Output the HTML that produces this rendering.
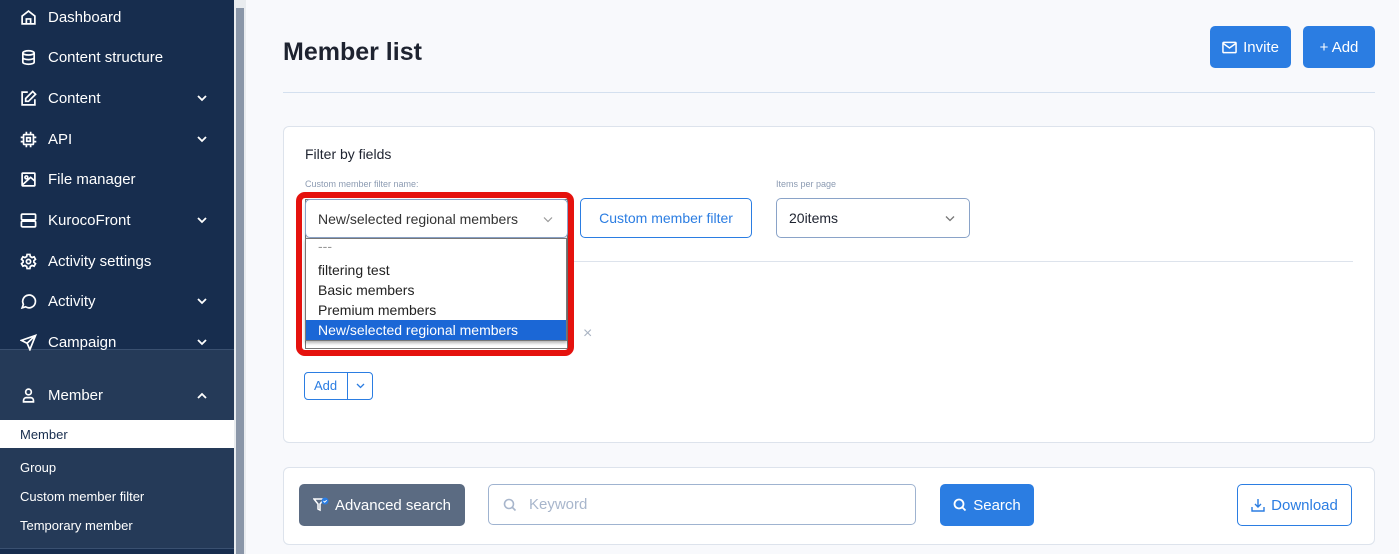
<!DOCTYPE html>
<html><head><style>
*{box-sizing:border-box;margin:0;padding:0}
body{width:1399px;height:554px;overflow:hidden;background:#f8f9fc;font-family:"Liberation Sans",sans-serif;position:relative}
.sb{position:absolute;left:0;top:0;width:234px;height:554px;background:#172d4e}
.scr{position:absolute;left:234px;top:0;width:12px;height:554px;background:#e9ecef}
.scr i{position:absolute;left:2px;top:8px;width:8px;height:546px;background:#8a96a8}
.it{position:absolute;left:20px;color:#fff;font-size:15px;display:flex;align-items:center;gap:11px;height:20px}
.it svg{flex:none}
.chev{position:absolute;left:196px}
.sub{position:absolute;left:20px;color:#fff;font-size:13px}
.abs{position:absolute}
.btn{position:absolute;background:#2b7de2;color:#fff;border-radius:5px;font-size:15px;display:flex;align-items:center;justify-content:center;gap:6px}
</style></head><body>
<div class="sb"></div>
<div class="abs" style="left:0;top:349px;width:234px;height:200px;background:#253a58;border-top:1px solid #3a5070;border-bottom:1px solid #3a5070"></div>
<div class="scr"><i></i></div>
<div class="it" style="top:7px"><svg width="17" height="17" viewBox="0 0 24 24" fill="none" stroke="#fff" stroke-width="2.4"><path d="M3 10l9-7 9 7v11H3z M9 21v-7h6v7"/></svg>Dashboard</div>
<div class="it" style="top:47px"><svg width="17" height="17" viewBox="0 0 24 24" fill="none" stroke="#fff" stroke-width="2.4"><ellipse cx="12" cy="5.5" rx="8" ry="3"/><path d="M4 5.5v13c0 1.7 3.6 3 8 3s8-1.3 8-3v-13M4 12c0 1.7 3.6 3 8 3s8-1.3 8-3"/></svg>Content structure</div>
<div class="it" style="top:88px"><svg width="17" height="17" viewBox="0 0 24 24" fill="none" stroke="#fff" stroke-width="2.4"><path d="M11 3H3v18h18v-8M18 2l4 4-10 10H8v-4z"/></svg>Content</div>
<div class="it" style="top:129px"><svg width="17" height="17" viewBox="0 0 24 24" fill="none" stroke="#fff" stroke-width="2.4"><rect x="5" y="5" width="14" height="14" rx="1"/><rect x="9.5" y="9.5" width="5" height="5"/><path d="M9 1v4M15 1v4M9 19v4M15 19v4M1 9h4M1 15h4M19 9h4M19 15h4"/></svg>API</div>
<div class="it" style="top:169px"><svg width="17" height="17" viewBox="0 0 24 24" fill="none" stroke="#fff" stroke-width="2.4"><rect x="3" y="3" width="18" height="18" rx="1"/><circle cx="9" cy="9" r="2"/><path d="M21 14l-6-5-12 11"/></svg>File manager</div>
<div class="it" style="top:210px"><svg width="17" height="17" viewBox="0 0 24 24" fill="none" stroke="#fff" stroke-width="2.4"><rect x="2" y="3" width="20" height="8" rx="1.5"/><rect x="2" y="13" width="20" height="8" rx="1.5"/><path d="M6 7h.01M6 17h.01"/></svg>KurocoFront</div>
<div class="it" style="top:251px"><svg width="17" height="17" viewBox="0 0 24 24" fill="none" stroke="#fff" stroke-width="2.4"><circle cx="12" cy="12" r="3"/><path d="M10 2h4l.6 3 2.4 1.4 2.9-1 2 3.5-2.3 2v2.2l2.3 2-2 3.5-2.9-1L14.6 19l-.6 3h-4l-.6-3L7 17.6l-2.9 1-2-3.5 2.3-2v-2.2l-2.3-2 2-3.5 2.9 1L9.4 5z"/></svg>Activity settings</div>
<div class="it" style="top:291px"><svg width="17" height="17" viewBox="0 0 24 24" fill="none" stroke="#fff" stroke-width="2.4"><path d="M3 21l1.8-5A9 9 0 1 1 8 19.5z"/></svg>Activity</div>
<div class="it" style="top:332px"><svg width="17" height="17" viewBox="0 0 24 24" fill="none" stroke="#fff" stroke-width="2.4"><path d="M22 2L2 9l8 4 4 9z M10 13L22 2"/></svg>Campaign</div>
<div class="it" style="top:385px"><svg width="17" height="17" viewBox="0 0 24 24" fill="none" stroke="#fff" stroke-width="2.4"><circle cx="12" cy="7" r="4"/><path d="M5 21v-2a4 4 0 0 1 4-4h6a4 4 0 0 1 4 4v2z"/></svg>Member</div>
<svg class="chev" style="top:94px" width="12" height="8" viewBox="0 0 12 8" fill="none" stroke="#fff" stroke-width="1.8"><path d="M2 2l4 4 4-4"/></svg>
<svg class="chev" style="top:135px" width="12" height="8" viewBox="0 0 12 8" fill="none" stroke="#fff" stroke-width="1.8"><path d="M2 2l4 4 4-4"/></svg>
<svg class="chev" style="top:216px" width="12" height="8" viewBox="0 0 12 8" fill="none" stroke="#fff" stroke-width="1.8"><path d="M2 2l4 4 4-4"/></svg>
<svg class="chev" style="top:297px" width="12" height="8" viewBox="0 0 12 8" fill="none" stroke="#fff" stroke-width="1.8"><path d="M2 2l4 4 4-4"/></svg>
<svg class="chev" style="top:338px" width="12" height="8" viewBox="0 0 12 8" fill="none" stroke="#fff" stroke-width="1.8"><path d="M2 2l4 4 4-4"/></svg>
<svg class="chev" style="top:392px" width="12" height="8" viewBox="0 0 12 8" fill="none" stroke="#fff" stroke-width="1.8"><path d="M2 6l4-4 4 4"/></svg>
<div class="abs" style="left:0;top:420px;width:234px;height:28px;background:#fff"></div>
<div class="sub" style="top:427px;color:#172d4e">Member</div>
<div class="sub" style="top:460px">Group</div>
<div class="sub" style="top:489px">Custom member filter</div>
<div class="sub" style="top:518px">Temporary member</div>

<div class="abs" style="left:283px;top:38px;font-size:25px;font-weight:bold;color:#1e2330">Member list</div>
<div class="btn" style="left:1210px;top:26px;width:81px;height:42px"><svg width="15" height="13" viewBox="0 0 16 13" fill="none" stroke="#fff" stroke-width="1.6"><rect x="1" y="1" width="14" height="11" rx="1"/><path d="M1 2l7 5 7-5"/></svg>Invite</div>
<div class="btn" style="left:1303px;top:26px;width:72px;height:42px">+ Add</div>
<div class="abs" style="left:283px;top:92px;width:1092px;height:1px;background:#d4e0ef"></div>

<div class="abs" style="left:283px;top:126px;width:1092px;height:317px;background:#fff;border:1px solid #dde3ec;border-radius:6px"></div>
<div class="abs" style="left:305px;top:146px;font-size:14px;color:#1e2330">Filter by fields</div>
<div class="abs" style="left:305px;top:179px;font-size:9px;color:#8c9bb2">Custom member filter name:</div>
<div class="abs" style="left:776px;top:179px;font-size:9px;color:#8c9bb2">Items per page</div>
<div class="abs" style="left:580px;top:198px;width:172px;height:40px;border:1px solid #2b7de2;border-radius:5px;color:#2b7de2;font-size:14px;display:flex;align-items:center;justify-content:center">Custom member filter</div>
<div class="abs" style="left:776px;top:198px;width:194px;height:40px;border:1px solid #8aa3c8;border-radius:5px;color:#1e2330;font-size:14px;padding:11px 12px">20items<svg style="position:absolute;right:14px;top:16px" width="10" height="7" viewBox="0 0 10 7" fill="none" stroke="#777" stroke-width="1.3"><path d="M1 1.5l4 4 4-4"/></svg></div>
<div class="abs" style="left:305px;top:261px;width:1048px;height:1px;background:#dde3ec"></div>
<div class="abs" style="left:583px;top:325px;color:#aab4c3;font-size:16px">&#215;</div>
<div class="abs" style="left:304px;top:372px;width:69px;height:28px;border:1px solid #2b7de2;border-radius:4px;color:#2b7de2;font-size:13px"><span style="position:absolute;left:9px;top:5px">Add</span><span style="position:absolute;left:42px;top:0;width:1px;height:26px;background:#2b7de2"></span><svg style="position:absolute;left:51px;top:10px" width="9" height="6" viewBox="0 0 9 6" fill="none" stroke="#2b7de2" stroke-width="1.3"><path d="M1 1l3.5 3.5L8 1"/></svg></div>

<div class="abs" style="left:305px;top:199px;width:263px;height:150px;border:1px solid #777;background:#fff"></div>
<div class="abs" style="left:305px;top:199px;width:263px;height:39px;border:1px solid #8aa3c8;border-radius:5px;background:#fff;font-size:14px;color:#333;padding:11px 12px;box-shadow:0 2px 3px rgba(0,0,0,.15)">New/selected regional members<svg style="position:absolute;right:14px;top:16px" width="10" height="7" viewBox="0 0 10 7" fill="none" stroke="#999" stroke-width="1.2"><path d="M1 1.5l4 4 4-4"/></svg></div>
<div class="abs" style="left:305px;top:238px;width:262px;height:103px;background:#fff;border:1px solid #777;font-size:14px;color:#222;line-height:20px;box-shadow:0 2px 3px rgba(0,0,0,.3)">
<div style="padding-left:12px;color:#999;height:21px;line-height:14px">---</div>
<div style="padding-left:12px">filtering test</div>
<div style="padding-left:12px">Basic members</div>
<div style="padding-left:12px">Premium members</div>
<div style="padding-left:12px;background:#1b67d6;color:#fff">New/selected regional members</div>
</div>
<div class="abs" style="left:296px;top:192px;width:278px;height:164px;border:6px solid #e5120e;border-radius:9px"></div>

<div class="abs" style="left:283px;top:467px;width:1092px;height:78px;background:#fff;border:1px solid #dde3ec;border-radius:6px"></div>
<div class="btn" style="left:299px;top:484px;width:166px;height:42px;background:#5b6b82"><svg width="16" height="16" viewBox="0 0 16 16"><path d="M1 2h10l-4 5v6l-2-1V7z" fill="none" stroke="#fff" stroke-width="1.5"/><circle cx="12" cy="4" r="3.5" fill="#2b7de2"/><path d="M10.5 4l1.2 1.2 2-2" fill="none" stroke="#fff" stroke-width="1"/></svg>Advanced search</div>
<div class="abs" style="left:488px;top:484px;width:428px;height:41px;border:1px solid #9fb3d0;border-radius:5px;color:#a8b6cc;font-size:15px;padding:11px 14px 0 40px">Keyword<svg style="position:absolute;left:14px;top:13px" width="14" height="14" viewBox="0 0 14 14" fill="none" stroke="#a8b6cc" stroke-width="1.6"><circle cx="6" cy="6" r="4.5"/><path d="M9.5 9.5l3 3"/></svg></div>
<div class="btn" style="left:940px;top:484px;width:94px;height:42px"><svg width="14" height="14" viewBox="0 0 14 14" fill="none" stroke="#fff" stroke-width="1.8"><circle cx="6" cy="6" r="4.5"/><path d="M9.5 9.5l3 3"/></svg>Search</div>
<div class="abs" style="left:1237px;top:484px;width:115px;height:42px;border:1px solid #2b7de2;border-radius:5px;color:#2b7de2;font-size:15px;display:flex;align-items:center;justify-content:center;gap:6px"><svg width="14" height="14" viewBox="0 0 14 14" fill="none" stroke="#2b7de2" stroke-width="1.4"><path d="M7 1v8M4 6l3 3 3-3M1 9v4h12V9"/></svg>Download</div>
</body></html>
